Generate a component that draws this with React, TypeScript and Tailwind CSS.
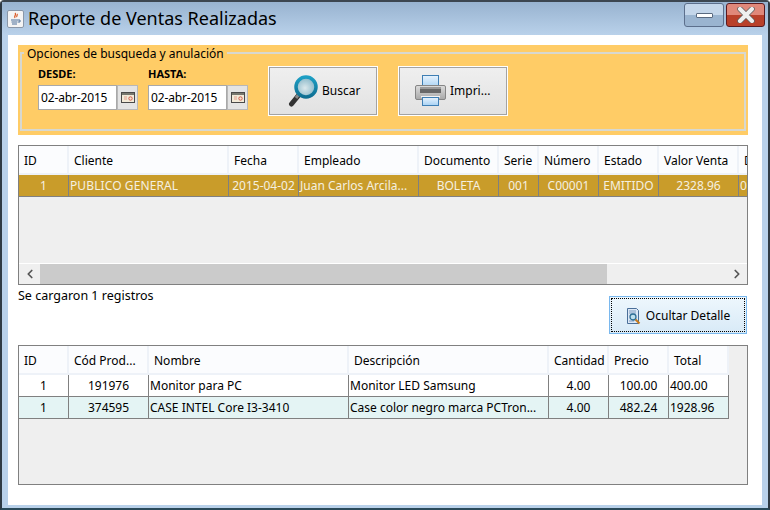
import React from "react";
import { ChevronLeft, ChevronRight } from "lucide-react";

type Col = { label: string; width: string; align: string };

const ventasCols: Col[] = [
  { label: "ID", width: "w-[50px]", align: "text-center" },
  { label: "Cliente", width: "w-[160px]", align: "pl-[1px] text-left tracking-[0.1px]" },
  { label: "Fecha", width: "w-[70px]", align: "text-center" },
  { label: "Empleado", width: "w-[120px]", align: "pl-[1px] text-left" },
  { label: "Documento", width: "w-[80px]", align: "text-center" },
  { label: "Serie", width: "w-[40px]", align: "text-center" },
  { label: "Número", width: "w-[60px]", align: "text-center" },
  { label: "Estado", width: "w-[60px]", align: "text-center" },
  { label: "Valor Venta", width: "w-[80px]", align: "text-center" },
  { label: "D", width: "w-[10px]", align: "pl-[1px] text-left" },
];

const venta = ["1", "PUBLICO GENERAL", "2015-04-02", "Juan Carlos Arcila...", "BOLETA", "001", "C00001", "EMITIDO", "2328.96", "0"];

const detalleCols: Col[] = [
  { label: "ID", width: "w-[50px]", align: "text-center" },
  { label: "Cód Prod...", width: "w-[80px]", align: "text-center" },
  { label: "Nombre", width: "w-[200px]", align: "pl-[1px] text-left" },
  { label: "Descripción", width: "w-[200px]", align: "pl-[1px] text-left" },
  { label: "Cantidad", width: "w-[60px]", align: "text-center" },
  { label: "Precio", width: "w-[60px]", align: "text-center" },
  { label: "Total", width: "w-[60px]", align: "pl-[1px] text-left" },
];

const detalle = [
  ["1", "191976", "Monitor para PC", "Monitor LED Samsung", "4.00", "100.00", "400.00"],
  ["1", "374595", "CASE INTEL Core I3-3410", "Case color negro marca PCTron...", "4.00", "482.24", "1928.96"],
];

function JavaIcon() {
  return (
    <svg width="17" height="18" viewBox="0 0 17 18" className="shrink-0">
      <rect x="0.5" y="0.5" width="16" height="17" rx="1.5" fill="#f4f4f4" stroke="#8a97a8" />
      <path d="M8 3c2 1.5-1.5 3 0 5M10 4c1 1-1 2 0 3" stroke="#d8541e" strokeWidth="1.2" fill="none" />
      <path d="M4 10h7M4.5 12h6M5 14h5" stroke="#4a6f99" strokeWidth="1.1" />
      <path d="M11 10h2v2h-2" stroke="#4a6f99" fill="none" />
    </svg>
  );
}

function CalendarIcon() {
  return (
    <svg width="14" height="11" viewBox="0 0 14 11">
      <rect x="0.5" y="0.5" width="13" height="10" fill="#f2ead8" stroke="#4a4a4a" />
      <rect x="1" y="1" width="12" height="2" fill="#77776e" />
      <circle cx="9.5" cy="6.5" r="1.7" fill="none" stroke="#d65a4a" />
      <path d="M3 5h3M3 7h3" stroke="#e0a090" />
    </svg>
  );
}

function SearchIcon() {
  return (
    <svg width="30" height="33" viewBox="0 0 30 33">
      <defs>
        <radialGradient id="lens" cx="0.45" cy="0.55" r="0.6">
          <stop offset="0" stopColor="#dbe8ec" />
          <stop offset="1" stopColor="#7fb2c4" />
        </radialGradient>
        <linearGradient id="ring" x1="0" y1="0" x2="0" y2="1">
          <stop offset="0" stopColor="#1d9fc4" />
          <stop offset="1" stopColor="#0f6f92" />
        </linearGradient>
      </defs>
      <path d="M10 21 L3.5 29" stroke="#333" strokeWidth="5" strokeLinecap="round" />
      <path d="M11 19 L8 23" stroke="#888" strokeWidth="3" />
      <circle cx="18" cy="12" r="10" fill="url(#lens)" stroke="url(#ring)" strokeWidth="3.5" />
    </svg>
  );
}

function PrinterIcon() {
  return (
    <svg width="31" height="32" viewBox="0 0 31 32">
      <defs>
        <linearGradient id="paper" x1="0" y1="0" x2="0" y2="1">
          <stop offset="0" stopColor="#e8f3fd" />
          <stop offset="1" stopColor="#a8d2f4" />
        </linearGradient>
        <linearGradient id="body" x1="0" y1="0" x2="0" y2="1">
          <stop offset="0" stopColor="#dcdcdc" />
          <stop offset="1" stopColor="#a8a8a8" />
        </linearGradient>
      </defs>
      <rect x="7.5" y="0.5" width="16" height="12" fill="url(#paper)" stroke="#3f7fb4" />
      <rect x="0.5" y="10.5" width="30" height="14" rx="1.5" fill="url(#body)" stroke="#858585" />
      <rect x="5" y="12" width="21" height="2" fill="#9a9a9a" />
      <rect x="5" y="14" width="21" height="4" fill="#686868" />
      <rect x="6" y="21" width="19" height="1.5" fill="#f4f4f4" />
      <rect x="7.5" y="22.5" width="16" height="8" fill="url(#paper)" stroke="#3f7fb4" />
    </svg>
  );
}

function DetailIcon() {
  return (
    <svg width="16" height="18" viewBox="0 0 16 18">
      <path d="M1.5 1.5h9l2 2v13h-11z" fill="#dce8f6" stroke="#4a6f99" />
      <path d="M3 4h7M3 6h7M3 14h5" stroke="#7e9cc0" />
      <circle cx="7" cy="10" r="3" fill="#bfe0ee" stroke="#2f6f96" strokeWidth="1.3" />
      <path d="M9.5 12.5l4 4" stroke="#c77a1c" strokeWidth="2" />
    </svg>
  );
}

function DateField({ label }: { label: string }) {
  return (
    <div className="w-[100px]">
      <div className="h-[20px] text-[11px] font-bold leading-[20px] text-black">{label}</div>
      <div className="mt-[1px] flex h-[25px]">
        <div className="flex w-[79px] items-center border border-[#a9a9a9] bg-white pl-[2px] pt-[1px] text-[12px] tracking-[-0.15px]">02-abr-2015</div>
        <div className="flex w-[21px] items-center justify-center border border-[#b8b8b8] bg-[#e4e4e4]">
          <CalendarIcon />
        </div>
      </div>
    </div>
  );
}

function BigButton({ icon, text, pad }: { icon: React.ReactNode; text: string; pad: string }) {
  return (
    <div className="h-[50px] w-[110px] border border-white">
      <div className={`flex h-full items-center gap-[4px] border border-[#a3a3a3] bg-gradient-to-b from-[#efefef] to-[#e2e2e2] text-[12px] ${pad}`}>
        {icon}
        <span>{text}</span>
      </div>
    </div>
  );
}

function TableHead({ cols }: { cols: Col[] }) {
  return (
    <div className="flex h-[29px] shrink-0">
      {cols.map((c) => (
        <div key={c.label} className={`${c.width} h-full shrink-0 overflow-hidden whitespace-nowrap border-r-2 border-b-2 border-[#eef2f8] bg-[#fbfcfe] pl-[5px] text-[12px] leading-[30px]`}>
          {c.label}
        </div>
      ))}
    </div>
  );
}

function TableRow({ cols, cells, rowClass }: { cols: Col[]; cells: string[]; rowClass: string }) {
  return (
    <div className={`flex h-[22px] shrink-0 ${rowClass}`}>
      {cols.map((c, i) => (
        <div key={c.label} className={`${c.width} ${c.align} shrink-0 overflow-hidden whitespace-nowrap border-r border-b border-[#808080] text-[12px] leading-[21px]`}>
          {cells[i]}
        </div>
      ))}
    </div>
  );
}

export default function App() {
  return (
    <div className="flex h-[510px] w-[770px] flex-col overflow-hidden bg-white font-['Noto_Sans',sans-serif] text-black">
      <div className="flex h-full flex-col rounded-t-[4px] border-x-2 border-t-2 border-b-2 border-x-[#2f3a44] border-t-[#3c4650] border-b-[#2a4a5a] bg-[#b9d1ea]">
        <div className="flex h-[33px] shrink-0 items-center bg-gradient-to-b from-[#98b3d0] to-[#b9d1ea] pl-[5px] pr-[3px]">
          <JavaIcon />
          <div className="ml-[4px] flex-1 text-[18px]">Reporte de Ventas Realizadas</div>
          <div className="mb-[8px] flex h-[24px] gap-[2px] self-end">
            <div className="flex w-[40px] items-center justify-center rounded-[3px] border border-[#5c6f8c] bg-gradient-to-b from-[#c4d6ea] from-50% to-[#9ab4d0] to-50%">
              <div className="h-[5px] w-[17px] rounded-[1px] border border-[#5a6a80] bg-white" />
            </div>
            <div className="flex w-[39px] items-center justify-center rounded-[3px] border border-[#5a1a20] bg-gradient-to-b from-[#e0887a] from-50% to-[#b9402a] to-50%">
              <svg width="18" height="16" viewBox="0 0 18 16">
                <path d="M3 2l12 12M15 2L3 14" stroke="#5f5f5f" strokeWidth="5.5" strokeLinecap="round" />
                <path d="M3 2l12 12M15 2L3 14" stroke="#efefef" strokeWidth="4" strokeLinecap="round" />
              </svg>
            </div>
          </div>
        </div>
        <div className="flex min-h-0 flex-1 px-[6px] pb-[3px]">
          <div className="min-w-0 flex-1 bg-white px-[10px] pt-[10px]">
            <div className="h-[90px] w-[730px] bg-[#ffcc66] px-[2px] pb-[2px]">
              <fieldset className="h-[86px] border-2 border-[#d8d8d0] px-[16px]">
                <legend className="ml-[-14px] px-[3px] text-[12px] leading-[16px]">
                  <span className="inline-block translate-y-[1px]">Opciones de busqueda y anulación</span>
                </legend>
                <div className="mt-[3px] flex">
                  <DateField label="DESDE:" />
                  <div className="ml-[10px]"><DateField label="HASTA:" /></div>
                  <div className="ml-[20px] mt-[2px]"><BigButton icon={<SearchIcon />} text="Buscar" pad="pl-[18px]" /></div>
                  <div className="ml-[20px] mt-[2px]"><BigButton icon={<PrinterIcon />} text="Impri..." pad="pl-[15px]" /></div>
                </div>
              </fieldset>
            </div>

            <div className="mt-[10px] flex h-[140px] w-[730px] flex-col overflow-hidden border border-[#808080] bg-[#efefef]">
              <TableHead cols={ventasCols} />
              <TableRow cols={ventasCols} cells={venta} rowClass="bg-[#c99c2a] text-[#f5f0e0]" />
              <div className="flex-1" />
              <div className="flex h-[21px] items-stretch border-t border-white">
                <div className="flex w-[21px] items-center justify-center"><ChevronLeft size={14} strokeWidth={3} className="text-[#555]" /></div>
                <div className="w-[567px] bg-[#cbcbcb]" />
                <div className="flex-1" />
                <div className="flex w-[21px] items-center justify-center"><ChevronRight size={14} strokeWidth={3} className="text-[#555]" /></div>
              </div>
            </div>

            <div className="flex h-[60px] w-[730px] items-start justify-between">
              <div className="mt-[2px] text-[12.5px] leading-[17px]">Se cargaron 1 registros</div>
              <div className="mr-[1px] mt-[11px] h-[38px] w-[138px] border border-[#7ab8ee] bg-gradient-to-b from-[#eef7fd] to-[#d8eaf7] p-[1px]">
                <div className="flex h-full items-center justify-center gap-[4px] border border-dotted border-black pt-[1px] text-[12px]">
                  <DetailIcon />
                  <span>Ocultar Detalle</span>
                </div>
              </div>
            </div>

            <div className="flex h-[140px] w-[730px] flex-col border border-[#808080] bg-[#efefef]">
              <TableHead cols={detalleCols} />
              <TableRow cols={detalleCols} cells={detalle[0]} rowClass="w-[710px] bg-white" />
              <TableRow cols={detalleCols} cells={detalle[1]} rowClass="w-[710px] bg-[#e4f4f4]" />
            </div>
          </div>
        </div>
      </div>
    </div>
  );
}
